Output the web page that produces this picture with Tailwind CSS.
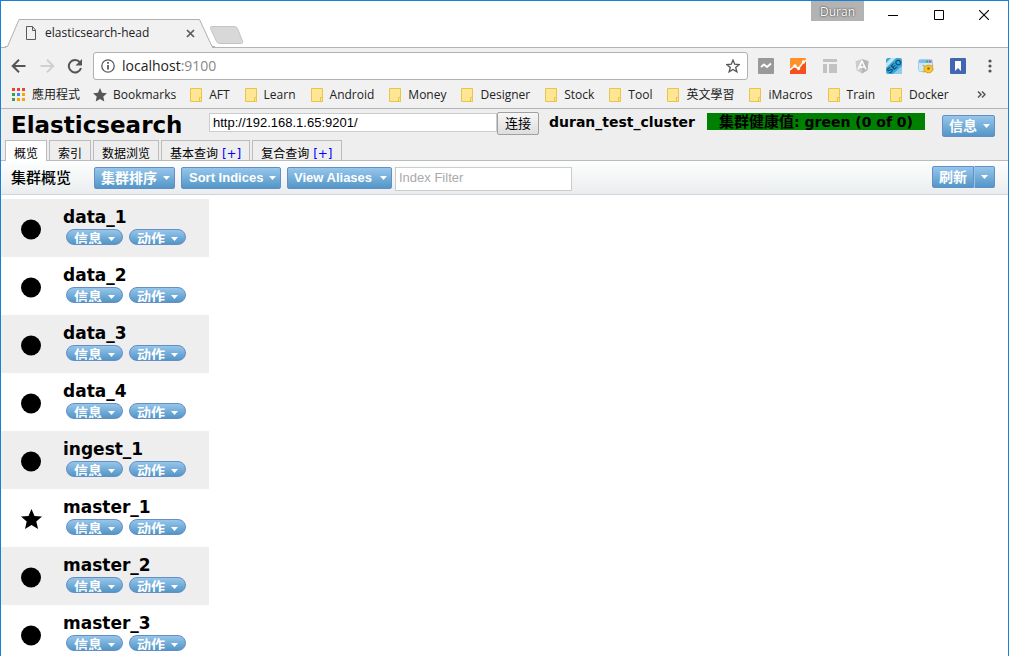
<!DOCTYPE html>
<html lang="zh">
<head>
    <meta charset="UTF-8">
    <meta name="viewport" content="width=device-width, initial-scale=1.0">
    <title>elasticsearch-head</title>
    <script src="https://cdn.jsdelivr.net/npm/@tailwindcss/browser@4"></script>
</head>
<body class="h-screen overflow-hidden bg-white text-black">
    <svg class="hidden">
        <symbol id="folder" viewBox="0 0 12 14">
            <path d="M.5 .5h11v9.500v3.500h-11z" fill="#ffe694" stroke="#e9c44d"/>
            <path d="M9.500 13.500v-4h2v4z" fill="#ffe694" stroke="#e9c44d"/>
        </symbol>
        <symbol id="caret" viewBox="0 0 7 4">
            <path d="M0 0h7L3.500 4z" fill="currentColor"/>
        </symbol>
        <symbol id="master" viewBox="0 0 22 22">
            <path d="M10.500 0l3 7 7.500 .6-5.700 5 1.800 7.400-6.600-4-6.500 4 1.700-7.400-5.700-5L7.500 7z" fill="#000"/>
        </symbol>
        <symbol id="data" viewBox="0 0 22 22">
            <circle cx="10" cy="10.500" r="10" fill="#000"/>
        </symbol>
    </svg>

    <div class="h-full overflow-hidden border border-b-0 border-[#1c7fd6] flex flex-col">
        <!-- Title bar -->
        <div class="flex shrink-0 items-end h-[47px] border-b border-[#b4b4b4]">
            <div class="relative w-[206px] h-[30px] ml-1 -mb-px">
                <svg class="absolute inset-0" width="210" height="30" viewBox="0 0 210 30">
                    <path d="M1 28.500h1.500L14 1.500h180.500L207 28.500V30H1z" fill="#f1f1f1"/>
                    <path d="M0 28.500h2.500L14 1.500h180.500L207 28.500h3" fill="none" stroke="#b0b0b0"/>
                </svg>
                <div class="relative flex items-center h-full pl-5 pr-4">
                    <svg width="12" height="14" viewBox="0 0 12 14" fill="none" stroke="#5a5a5a"><path d="M1.500 .5h6l3 3.500v9.500h-9zM7.500 .5V4.500h3"/></svg>
                    <span class="ml-2 grow font-['Open_Sans','Noto_Sans_CJK_TC',sans-serif] text-xs text-[#222]">elasticsearch-head</span>
                    <button aria-label="Close tab"><svg width="9" height="9" viewBox="0 0 9 9" stroke="#5a5a5a" stroke-width="1.700"><path d="M1 1l7 7M8 1L1 8"/></svg></button>
                </div>
            </div>
            <button aria-label="New tab" class="mb-[3px] ml-[-2px]"><svg width="36" height="18" viewBox="0 0 36 18"><path d="M2.500 .5h23q2 0 3 2l5 12.500q.8 2.500-1 2.500h-22q-2 0-3-2l-6-13q-.5-2 1-2z" fill="#d8d8d8" stroke="#c4c4c4"/></svg></button>
            <div class="ml-auto flex self-start">
                <button class="mr-4 h-5 w-[53px] bg-[#b3b3b3] pt-[2px] font-['Open_Sans',sans-serif] text-xs text-white text-shadow-[0_0_2px_#000]">Duran</button>
                <button aria-label="Minimize" class="flex h-7 w-[46px] items-center justify-center"><svg width="10" height="10" viewBox="0 0 10 10" class="-ml-5" stroke="#000"><path d="M0 5.500h10"/></svg></button>
                <button aria-label="Maximize" class="flex h-7 w-[46px] items-center justify-center"><svg width="10" height="10" viewBox="0 0 10 10" class="-ml-5" fill="none" stroke="#000"><path d="M.5 .5h9v9h-9z"/></svg></button>
                <button aria-label="Close" class="flex h-7 w-9 items-center justify-center"><svg width="10" height="10" viewBox="0 0 10 10" class="-ml-3" stroke="#000" stroke-width="1.100"><path d="M0 0l10 10M10 0L0 10"/></svg></button>
            </div>
        </div>

        <!-- Address bar -->
        <div class="flex shrink-0 items-center h-9 bg-[#f1f1f1] px-[10px]">
            <button aria-label="Back" class="mr-[14px]"><svg width="15" height="14" viewBox="0 0 15 14" fill="none" stroke="#555" stroke-width="2"><path d="M14.500 7H2M8 .8L1.700 7 8 13.200"/></svg></button>
            <button aria-label="Forward" class="mr-3"><svg width="15" height="14" viewBox="0 0 15 14" fill="none" stroke="#d0d0d0" stroke-width="2"><path d="M.5 7H13M7 .8L13.300 7 7 13.200"/></svg></button>
            <button aria-label="Reload" class="mr-[10px]"><svg width="16" height="16" viewBox="0 0 16 16"><path d="M13 4.500A6.200 6.200 0 1 0 14 10" fill="none" stroke="#555" stroke-width="2"/><path d="M15 1v6.500H8.500z" fill="#555"/></svg></button>
            <div class="flex grow items-center h-7 rounded-[3px] border border-[#b0b0b0] bg-white px-[7px]">
                <svg class="shrink-0" width="14" height="14" viewBox="0 0 14 14" fill="none" stroke="#5a5a5a"><circle cx="7" cy="7" r="6.200" stroke-width="1.300"/><path d="M7 6v4.500M7 3v1.700" stroke-width="1.800"/></svg>
                <div class="ml-[7px] grow font-['Open_Sans',sans-serif] text-sm leading-5 text-[#222]">localhost<span class="text-[#888]">:9100</span></div>
                <button aria-label="Bookmark this page"><svg width="14" height="14" viewBox="0 0 14 14" fill="none" stroke="#555" stroke-width="1.300"><path d="M7 1l1.700 4.200 4.500.3-3.500 2.900 1.200 4.400L7 10.400l-3.900 2.400 1.200-4.400L.8 5.500l4.500-.3z"/></svg></button>
            </div>
            <div class="flex shrink-0 items-center gap-4 ml-[10px]">
                <svg width="16" height="16" viewBox="0 0 16 16"><rect width="16" height="16" rx="1" fill="#999"/><path d="M3 9l3-2.500 3 2.500 4-3.500" fill="none" stroke="#fff" stroke-width="1.800"/></svg>
                <svg width="16" height="16" viewBox="0 0 16 16"><rect width="16" height="16" rx="1" fill="#ff9128"/><path d="M0 12l4-3 4 2 6-7 2-1v13H0z" fill="#f4511e"/><path d="M0 12l4.500-4 4 2.500 5-6.500L16 2.500" fill="none" stroke="#fff" stroke-width="1.500"/><g fill="#fff"><circle cx="5" cy="8" r="1.700"/><circle cx="8.500" cy="10.500" r="1.700"/><circle cx="13.500" cy="4" r="1.700"/></g></svg>
                <svg width="16" height="16" viewBox="0 0 16 16" fill="#c2c2c2"><path d="M1 1h14v3H1zM1 6h4v9H1zM7 6h8v9H7z"/></svg>
                <svg width="16" height="16" viewBox="0 0 16 16"><path d="M8 1l6.500 2.200-1 9L8 15.500l-5.500-3.300-1-9z" fill="#ccc"/><path d="M8 1l6.500 2.200-1 9L8 15.500z" fill="#b5b5b5"/><path d="M4 11.500L8 3l4 8.500M5.500 9h5" fill="none" stroke="#fff" stroke-width="1.500"/></svg>
                <svg width="16" height="16" viewBox="0 0 16 16"><rect width="16" height="16" rx="2" fill="#3ba6d8"/><path d="M0 5l5-5h5L0 10z" fill="#bfe4f5"/><path d="M16 8v8H7z" fill="#8ecbe8"/><text x="8" y="11" transform="rotate(-42 8 8)" text-anchor="middle" font-family="Liberation Sans" font-weight="bold" font-size="8" fill="#07466f">SEO</text></svg>
                <svg width="16" height="16" viewBox="0 0 16 16"><rect x=".5" y="1.500" width="14" height="12" rx="2" fill="#cfe8f8" stroke="#a7cdea"/><path d="M1 2h13v3H1z" fill="#7fbcf0"/><path d="M8 3.500h2" stroke="#2fae49" stroke-width="1.500"/><path d="M11 3.500h2" stroke="#e8432f" stroke-width="1.500"/><ellipse cx="10.500" cy="11" rx="4.500" ry="3.800" fill="#f6c92b" stroke="#d99c1c"/><path d="M5 7l2 2M5 14l2-1M15 7l-1 1" stroke="#e0a91f" stroke-width="1.600"/><circle cx="10.500" cy="10.500" r="1.300" fill="#8a671d"/></svg>
                <svg width="16" height="16" viewBox="0 0 16 16"><rect width="16" height="16" rx="1" fill="#4267b2"/><path d="M5 3h6v10l-3-3-3 3z" fill="#fff"/></svg>
                <button aria-label="Menu" class="w-4 flex justify-center"><svg width="4" height="14" viewBox="0 0 4 14" fill="#555"><circle cx="2" cy="2" r="1.600"/><circle cx="2" cy="7" r="1.600"/><circle cx="2" cy="12" r="1.600"/></svg></button>
            </div>
        </div>

        <!-- Bookmarks -->
        <div class="flex shrink-0 items-center h-[25px] border-b border-[#b4b4b4] bg-[#f1f1f1] pb-[3px] pl-[11px] font-['Open_Sans','Noto_Sans_CJK_TC',sans-serif] text-xs text-[#222] whitespace-nowrap">
            <a href="#" class="flex items-center gap-[7px] mr-[13px]">
                <svg width="13" height="13" viewBox="0 0 13 13"><path d="M0 0h3v3H0zM5 0h3v3H5zM10 0h3v3h-3z" fill="#ea4335"/><path d="M0 5h3v3H0zM0 10h3v3H0z" fill="#34a05a"/><path d="M5 5h3v3H5z" fill="#4285f4"/><path d="M10 5h3v3h-3zM5 10h3v3H5zM10 10h3v3h-3z" fill="#f9a600"/></svg>應用程式</a>
            <a href="#" class="flex items-center gap-[6px] mr-[14px]">
                <svg width="14" height="14" viewBox="0 0 14 14"><path d="M7 0l2 4.700 5 .5-3.700 3.300L11.300 13.500 7 11l-4.300 2.500L3.700 8.500 0 5.200l5-.5z" fill="#555"/></svg>Bookmarks</a>
            <div id="bookmarks" class="flex gap-[15px]"></div>
            <button aria-label="More bookmarks" class="ml-auto mr-[22px]"><svg width="9" height="7" viewBox="0 0 9 7" fill="none" stroke="#555" stroke-width="1.500"><path d="M1 .5l3 3-3 3M5 .5l3 3-3 3"/></svg></button>
        </div>

        <!-- Header -->
        <header class="shrink-0 bg-[#eee] font-['DejaVu_Sans','Noto_Sans_CJK_SC',sans-serif]">
            <div class="flex items-start h-[31px] pl-[10px] pr-[13px] whitespace-nowrap">
                <h1 class="w-[198px] text-[23px] leading-8 font-bold">Elasticsearch</h1>
                <form class="flex items-start pt-[3px]">
                    <input type="text" aria-label="Server" value="http://192.168.1.65:9201/" class="mt-px h-[19px] w-[288px] border border-[#ccc] bg-white px-[3px] font-['Liberation_Sans',sans-serif] text-[13px]">
                    <button type="button" class="h-[23px] w-[42px] rounded-[2px] border border-[#a0a0a0] bg-linear-to-b from-[#f6f6f6] to-[#dedede] pb-[2px] font-['Noto_Sans_CJK_SC',sans-serif] text-[13px] leading-[18px]">连接</button>
                </form>
                <div class="ml-[10px] mt-1 text-sm leading-[18px] font-bold">duran_test_cluster</div>
                <div class="ml-3 mt-1 flex h-[17px] bg-[green] px-3 text-sm leading-[18px] font-bold"><span class="text-[15px]">集群健康值</span>: green (0 of 0)</div>
                <button class="ml-auto mt-[6px] flex h-[22px] w-[53px] items-center justify-between rounded-[2px] border border-[#668dc6] bg-linear-to-b from-[#96c6eb] to-[#5296c7] pl-[6px] pr-1 text-sm leading-5 font-bold text-white">信息<svg width="7" height="4"><use href="#caret"/></svg></button>
            </div>
            <nav class="flex h-[21px] items-end gap-[2px] border-b border-[#bbb] pl-1 text-xs">
                <a href="#" class="-mb-px h-[21px] border border-b-0 border-[#bbb] bg-white px-2 leading-[26px]">概览</a>
                <a href="#" class="h-5 border border-b-0 border-[#bbb] px-2 leading-[26px]">索引</a>
                <a href="#" class="h-5 border border-b-0 border-[#bbb] px-2 leading-[26px]">数据浏览</a>
                <a href="#" class="h-5 border border-b-0 border-[#bbb] px-2 leading-[26px]">基本查询 <span class="text-[blue]">[+]</span></a>
                <a href="#" class="h-5 border border-b-0 border-[#bbb] px-2 leading-[26px]">复合查询 <span class="text-[blue]">[+]</span></a>
            </nav>
        </header>

        <!-- Cluster overview toolbar -->
        <div class="flex shrink-0 items-start h-[34px] border-b border-[#d2d5d7] bg-linear-to-b from-[#fdfefe] to-[#eaedef] pl-[10px] pr-[13px] pt-[6px] font-['Liberation_Sans','Noto_Sans_CJK_SC',sans-serif] whitespace-nowrap">
            <h2 class="w-[83px] text-[15px] leading-[22px] font-medium">集群概览</h2>
            <button class="mr-[6px] flex h-[22px] w-[81px] items-center justify-between rounded-[2px] border border-[#668dc6] bg-linear-to-b from-[#96c6eb] to-[#5296c7] pl-[6px] pr-1 text-sm leading-5 font-bold text-white">集群排序<svg width="7" height="4"><use href="#caret"/></svg></button>
            <button class="mr-[6px] flex h-[22px] w-[100px] items-center justify-between rounded-[2px] border border-[#668dc6] bg-linear-to-b from-[#96c6eb] to-[#5296c7] pl-[7px] pr-1 text-[13px] leading-5 font-bold text-white">Sort Indices<svg width="7" height="4"><use href="#caret"/></svg></button>
            <button class="mr-[3px] flex h-[22px] w-[105px] items-center justify-between rounded-[2px] border border-[#668dc6] bg-linear-to-b from-[#96c6eb] to-[#5296c7] pl-[6px] pr-1 text-[13px] leading-5 font-bold text-white">View Aliases<svg width="7" height="4"><use href="#caret"/></svg></button>
            <input type="text" aria-label="Index Filter" placeholder="Index Filter" class="h-6 w-[177px] border border-[#ccc] bg-white px-[3px] pb-[3px] text-[13px] placeholder:text-[#aaa]">
            <div class="ml-auto -mt-px flex">
                <button class="h-[22px] w-[42px] rounded-l-[2px] border border-[#668dc6] bg-linear-to-b from-[#96c6eb] to-[#5296c7] text-sm leading-5 font-bold text-white">刷新</button>
                <button aria-label="Refresh options" class="flex h-[22px] w-[21px] items-center justify-center rounded-r-[2px] border border-l-[#96c6eb] border-[#668dc6] bg-linear-to-b from-[#96c6eb] to-[#5296c7] text-white"><svg width="7" height="4"><use href="#caret"/></svg></button>
            </div>
        </div>

        <!-- Nodes -->
        <main id="nodes" class="mt-1 w-52 font-['DejaVu_Sans','Noto_Sans_CJK_SC',sans-serif]"></main>
    </div>

    <script>
        const bookmarks = ['AFT', 'Learn', 'Android', 'Money', 'Designer', 'Stock', 'Tool', '英文學習', 'iMacros', 'Train', 'Docker'];
        document.getElementById('bookmarks').innerHTML = bookmarks.map(name => `
            <a href="#" class="flex items-center gap-[7px]"><svg width="12" height="14"><use href="#folder"/></svg>${name}</a>
        `).join('');

        const nodes = ['data_1', 'data_2', 'data_3', 'data_4', 'ingest_1', 'master_1', 'master_2', 'master_3'];
        const elected = 'master_1';

        const menuButton = label => `
            <button class="flex h-4 w-[57px] items-center justify-between overflow-hidden rounded-full border border-[#668dc6] bg-linear-to-b from-[#96c6eb] to-[#5296c7] px-[7px] text-sm leading-4 font-bold text-white"><span class="pt-[3px]">${label}</span><svg class="mt-1" width="7" height="4"><use href="#caret"/></svg></button>`;

        document.getElementById('nodes').innerHTML = nodes.map(name => `
            <div class="flex h-[58px] odd:bg-[#eee] pl-5">
                <svg class="mt-5" width="22" height="22"><use href="#${name === elected ? 'master' : 'data'}"/></svg>
                <div class="ml-5 pt-2">
                    <div class="pb-[2px] text-[17px] leading-5 font-bold">${name}</div>
                    <div class="flex gap-[6px] pl-[3px]">${menuButton('信息')}${menuButton('动作')}</div>
                </div>
            </div>
        `).join('');
    </script>
</body>
</html>
